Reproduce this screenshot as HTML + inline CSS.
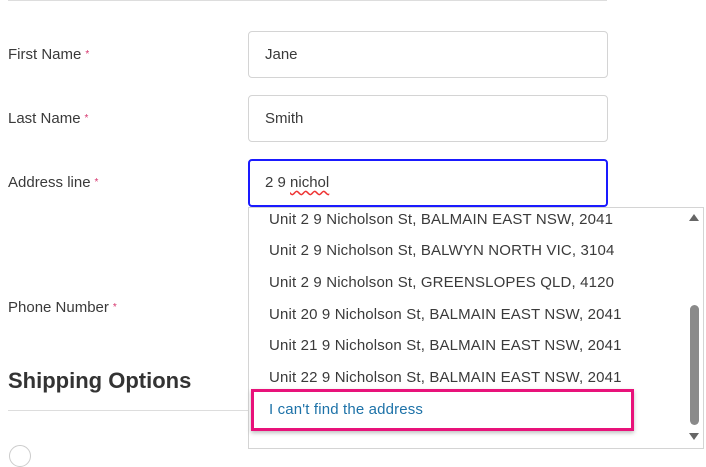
<!DOCTYPE html>
<html><head><style>
body{margin:0;width:706px;height:450px;overflow:hidden;background:#fff;font-family:"Liberation Sans",sans-serif;color:#3a3a3a;position:relative}
.a{position:absolute}
.lbl{font-size:15px;left:8px}
.lbl b{color:#d6336c;font-weight:normal;font-size:10px;position:relative;top:-2px;margin-left:4px}
.in{left:248px;width:360px;height:45px;border:1px solid #d4d4d4;border-radius:4px;box-sizing:border-box;font-size:15px;padding-left:16px;line-height:45px}
.it{left:269px;font-size:15px;white-space:nowrap;letter-spacing:0.15px}
</style></head><body>
<div class="a" style="left:8px;top:0;width:599px;height:1px;background:#ddd"></div>
<div class="a lbl" style="top:46px">First Name<b>*</b></div>
<div class="a lbl" style="top:110px">Last Name<b>*</b></div>
<div class="a lbl" style="top:174px">Address line<b>*</b></div>
<div class="a lbl" style="top:299px">Phone Number<b>*</b></div>
<div class="a" style="left:8px;top:368px;font-size:22px;font-weight:bold;color:#333">Shipping Options</div>
<div class="a" style="left:8px;top:410px;width:400px;height:1px;background:#ddd"></div>
<div class="a" style="left:9px;top:445px;width:20px;height:20px;border:1px solid #ccc;border-radius:50%"></div>
<div class="a in" style="top:31px;height:47px">Jane</div>
<div class="a in" style="top:95px;height:47px">Smith</div>
<div class="a in" style="top:159px;height:48px;border:2px solid #1a1aff;padding-left:15px;line-height:44px">2 9 <span style="text-decoration:underline wavy #e33;text-underline-offset:3px">nichol</span></div>
<div class="a" style="left:248px;top:207px;width:456px;height:242px;border:1px solid #d4d4d4;box-sizing:border-box;background:#fff"></div>
<div class="a it" style="top:211px">Unit 2 9 Nicholson St, BALMAIN EAST NSW, 2041</div>
<div class="a it" style="top:242px">Unit 2 9 Nicholson St, BALWYN NORTH VIC, 3104</div>
<div class="a it" style="top:274px">Unit 2 9 Nicholson St, GREENSLOPES QLD, 4120</div>
<div class="a it" style="top:306px">Unit 20 9 Nicholson St, BALMAIN EAST NSW, 2041</div>
<div class="a it" style="top:337px">Unit 21 9 Nicholson St, BALMAIN EAST NSW, 2041</div>
<div class="a it" style="top:369px">Unit 22 9 Nicholson St, BALMAIN EAST NSW, 2041</div>
<div class="a" style="left:251px;top:389px;width:383px;height:42px;border:3px solid #e8127a;box-sizing:border-box;box-shadow:0 2px 4px rgba(0,0,0,.25)"></div>
<div class="a it" style="top:401px;color:#1d72a8">I can't find the address</div>
<div class="a" style="left:689px;top:214px;width:0;height:0;border-left:5px solid transparent;border-right:5px solid transparent;border-bottom:7px solid #666"></div>
<div class="a" style="left:689px;top:433px;width:0;height:0;border-left:5px solid transparent;border-right:5px solid transparent;border-top:7px solid #666"></div>
<div class="a" style="left:690px;top:305px;width:9px;height:120px;background:#8a8a8a;border-radius:5px"></div>
</body></html>
